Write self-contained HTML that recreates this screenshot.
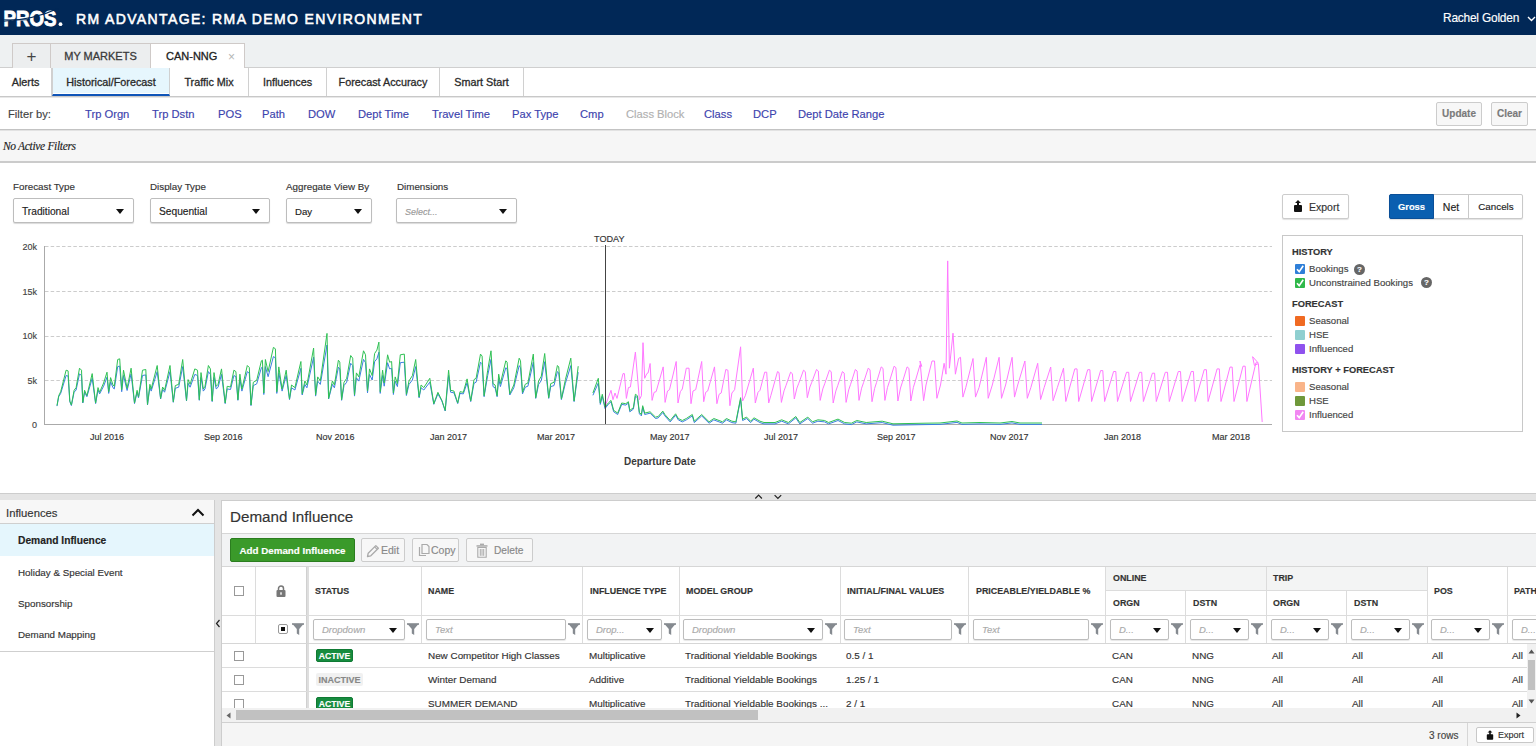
<!DOCTYPE html>
<html><head><meta charset="utf-8"><style>
*{box-sizing:border-box;margin:0;padding:0}
html,body{width:1536px;height:746px;overflow:hidden;background:#fff;font-family:"Liberation Sans",sans-serif;color:#333;position:relative}
.a{-webkit-text-stroke:0.15px}
.a{position:absolute;white-space:nowrap}
#hdr{left:0;top:0;width:1536px;height:35px;background:#012857}
#tabs{left:0;top:35px;width:1536px;height:33px;background:#eef1f2;border-bottom:1px solid #cfcfcf}
.tab{top:8px;height:25px;border:1px solid #cfcac8;border-bottom:none;background:#eceeef;font-size:11px;color:#3a3a3a;-webkit-text-stroke:0.3px;text-align:center;line-height:25px}
#sub{left:0;top:68px;width:1536px;height:29px;background:#fff;border-bottom:1px solid #c8c8c8}
.st{top:0;height:28px;border-right:1px solid #d0d0d0;font-size:10.8px;color:#2a2a2a;-webkit-text-stroke:0.3px;text-align:center;line-height:29px}
#filt{left:0;top:97px;width:1536px;height:33px;background:#fff;border-top:1px solid #e8e8e8;border-bottom:1px solid #c3c3c3}
.fl{top:10px;font-size:11.2px;color:#3c43ad}
#naf{left:0;top:130px;width:1536px;height:33px;background:#f6f6f6;border-top:1px solid #e2e2e2;border-bottom:2px solid #cbcbcb}
.btn{border:1px solid #ccc;border-radius:2px;background:#f7f7f7;font-size:11px;color:#777;text-align:center}
.lbl{font-size:9.8px;color:#333;top:181px}
.sel{top:198px;height:25px;border:1px solid #bdbdbd;border-radius:2px;background:#fff;font-size:10.2px;color:#222;line-height:25px;padding-left:8px;box-shadow:0 1px 1px rgba(0,0,0,.15)}
.car{position:absolute;width:0;height:0;border-left:4.5px solid transparent;border-right:4.5px solid transparent;border-top:5px solid #111}
.yl{font-size:9px;color:#444;text-align:right;width:30px;left:7px}
.xl{font-size:9px;color:#333;top:432px}
.lg{font-size:9.6px;color:#444;left:1309px}
.lgh{font-size:9.3px;font-weight:bold;color:#333;left:1292px}
.sw{width:10px;height:10px;left:1295px;border-radius:1px}
.q{width:11px;height:11px;border-radius:50%;background:#666;color:#fff;font-size:8px;font-weight:bold;text-align:center;line-height:11px}
.li{font-size:9.8px;color:#333;left:18px}
.hd{font-size:8.9px;font-weight:bold;color:#333}
.vl{width:1px;background:#dcdcdc}
.hl{height:1px;background:#dcdcdc}
.fi{top:619px;height:21px;border:1px solid #bdbdbd;border-radius:2px;background:#fff;font-size:9.5px;color:#aaa;font-style:italic;line-height:19px;padding-left:8px;box-shadow:0 1px 1px rgba(0,0,0,.1)}
.cell{font-size:9.9px;color:#333}
.cb{width:10px;height:10px;border:1px solid #999;background:#fff;left:234px}
</style></head><body>
<div id="hdr" class="a">
  <svg class="a" style="left:0;top:0" width="70" height="35"><text x="3.5" y="25.7" font-family="Liberation Sans" font-weight="bold" font-size="22.5" fill="#fff" stroke="#fff" stroke-width="0.9" textLength="53" lengthAdjust="spacingAndGlyphs">PROS</text><path d="M1 21.5 Q 35 19.5 58 8.5" stroke="#012857" stroke-width="1.2" fill="none"/><path d="M3 19.8 H30" stroke="#012857" stroke-width="0.9"/><circle cx="60.5" cy="24.2" r="1.9" fill="#fff"/></svg>
  <div class="a" style="left:76px;top:11px;font-size:14px;color:#fff;letter-spacing:1.37px;-webkit-text-stroke:0.55px #fff">RM ADVANTAGE: RMA DEMO ENVIRONMENT</div>
  <div class="a" style="left:1443px;top:10.5px;font-size:11.9px;color:#fff;letter-spacing:-0.2px">Rachel Golden</div>
  <svg class="a" style="left:1527px;top:16px" width="9" height="6"><path d="M1 1 L4.5 4.5 L8 1" stroke="#fff" stroke-width="1.4" fill="none"/></svg>
</div>
<div id="tabs" class="a">
  <div class="a tab" style="left:12px;width:39px;font-size:17px;line-height:25px;color:#444;-webkit-text-stroke:0">+</div>
  <div class="a tab" style="left:50px;width:101px">MY MARKETS</div>
  <div class="a tab" style="left:150px;width:95px;background:#fff;height:26px"><span style="position:absolute;left:15px;font-size:11px;color:#222">CAN-NNG</span><span style="position:absolute;left:77px;top:1px;color:#b5b5b5;font-size:12px;-webkit-text-stroke:0">&#215;</span></div>
</div>
<div id="sub" class="a">
  <div class="a st" style="left:0;width:52px">Alerts</div>
  <div class="a st" style="left:52px;width:118px;background:#e6f6fd;border-left:1px solid #d0d0d0;border-bottom:2px solid #0f55b8;line-height:29px;box-shadow:inset 0 -1px 0 #fff">Historical/Forecast</div>
  <div class="a st" style="left:170px;width:79px">Traffic Mix</div>
  <div class="a st" style="left:249px;width:78px">Influences</div>
  <div class="a st" style="left:327px;width:113px">Forecast Accuracy</div>
  <div class="a st" style="left:440px;width:84px">Smart Start</div>
</div>
<div id="filt" class="a">
  <div class="a fl" style="left:8px;color:#444">Filter by:</div>

<div class="a fl" style="left:85px">Trp Orgn</div>
<div class="a fl" style="left:152px">Trp Dstn</div>
<div class="a fl" style="left:218px">POS</div>
<div class="a fl" style="left:262px">Path</div>
<div class="a fl" style="left:308px">DOW</div>
<div class="a fl" style="left:358px">Dept Time</div>
<div class="a fl" style="left:432px">Travel Time</div>
<div class="a fl" style="left:512px">Pax Type</div>
<div class="a fl" style="left:580px">Cmp</div>
<div class="a fl" style="left:626px;color:#b0b0b0">Class Block</div>
<div class="a fl" style="left:704px">Class</div>
<div class="a fl" style="left:753px">DCP</div>
<div class="a fl" style="left:798px">Dept Date Range</div>
  <div class="a btn" style="left:1436px;top:4px;width:46px;height:24px;line-height:22px;font-weight:bold;font-size:10px;color:#7a7a7a">Update</div>
  <div class="a btn" style="left:1491px;top:4px;width:37px;height:24px;line-height:22px;font-weight:bold;font-size:10px;color:#7a7a7a">Clear</div>
</div>
<div id="naf" class="a">
  <div class="a" style="left:3px;top:9px;font-family:'Liberation Serif',serif;font-style:italic;font-size:11.5px;letter-spacing:-0.33px;color:#222">No Active Filters</div>
</div>

<div class="a lbl" style="left:13px">Forecast Type</div>
<div class="a lbl" style="left:150px">Display Type</div>
<div class="a lbl" style="left:286px">Aggregate View By</div>
<div class="a lbl" style="left:397px">Dimensions</div>
<div class="a sel" style="left:13px;width:121px">Traditional<div class="car" style="left:102px;top:10px"></div></div>
<div class="a sel" style="left:150px;width:120px">Sequential<div class="car" style="left:101px;top:10px"></div></div>
<div class="a sel" style="left:286px;width:86px"><span style="font-size:9.6px">Day</span><div class="car" style="left:67px;top:10px"></div></div>
<div class="a sel" style="left:396px;width:121px"><i style="color:#999;font-size:9px">Select...</i><div class="car" style="left:102px;top:10px"></div></div>
<div class="a btn" style="left:1282px;top:194px;width:67px;height:25px;background:#fff;color:#333;font-size:10.5px;line-height:24px;text-align:left;padding-left:26px;box-shadow:0 1px 1px rgba(0,0,0,.12)">Export
<svg style="position:absolute;left:10px;top:5px" width="10" height="12" viewBox="0 0 10 12"><path d="M5 0 L8 3 H6 V7 H4 V3 H2 Z" fill="#111"/><rect x="1" y="5" width="8" height="7" rx="1" fill="#111"/><path d="M4 3 H6 V8 H4Z" fill="#111"/></svg></div>
<div class="a" style="left:1389px;top:194px;width:134px;height:25px;border:1px solid #c9c9c9;border-radius:2px;background:#fff;box-shadow:0 1px 1px rgba(0,0,0,.12)">
  <div class="a" style="left:-1px;top:-1px;width:45px;height:25px;background:#0a5fb0;border:1px solid #0a4f98;border-radius:2px 0 0 2px;color:#fff;font-size:9.4px;font-weight:bold;text-align:center;line-height:24px">Gross</div>
  <div class="a" style="left:44px;top:0;width:35px;height:23px;border-right:1px solid #c9c9c9;color:#222;font-size:10.5px;text-align:center;line-height:24px">Net</div>
  <div class="a" style="left:79px;top:0;width:54px;height:23px;color:#222;font-size:9.8px;text-align:center;line-height:24px">Cancels</div>
</div>

<div class="a" style="left:1282px;top:235px;width:241px;height:197px;border:1px solid #c8c8c8;background:#fff"></div>
<div class="a lgh" style="top:247px">HISTORY</div>
<div class="a lgh" style="top:299px">FORECAST</div>
<div class="a lgh" style="top:365px">HISTORY + FORECAST</div>
<div class="a sw" style="top:264px;background:#2f7fd8"><svg width="10" height="10" style="position:absolute;left:0;top:0"><path d="M2 5.2 L4.2 7.6 L8.2 1.8" stroke="#fff" stroke-width="1.6" fill="none"/></svg></div>
<div class="a lg" style="top:263px">Bookings</div>
<div class="a sw" style="top:278px;background:#2fb84a"><svg width="10" height="10" style="position:absolute;left:0;top:0"><path d="M2 5.2 L4.2 7.6 L8.2 1.8" stroke="#fff" stroke-width="1.6" fill="none"/></svg></div>
<div class="a lg" style="top:277px">Unconstrained Bookings</div>
<div class="a sw" style="top:316px;background:#f06a22"></div>
<div class="a lg" style="top:315px">Seasonal</div>
<div class="a sw" style="top:330px;background:#8fcfd0"></div>
<div class="a lg" style="top:329px">HSE</div>
<div class="a sw" style="top:344px;background:#8f52ee"></div>
<div class="a lg" style="top:343px">Influenced</div>
<div class="a sw" style="top:382px;background:#f9b489"></div>
<div class="a lg" style="top:381px">Seasonal</div>
<div class="a sw" style="top:396px;background:#6f983a"></div>
<div class="a lg" style="top:395px">HSE</div>
<div class="a sw" style="top:410px;background:#f287f2"><svg width="10" height="10" style="position:absolute;left:0;top:0"><path d="M2 5.2 L4.2 7.6 L8.2 1.8" stroke="#fff" stroke-width="1.6" fill="none"/></svg></div>
<div class="a lg" style="top:409px">Influenced</div>
<div class="a q" style="left:1354px;top:264px">?</div>
<div class="a q" style="left:1421px;top:277px">?</div>
<svg class="a" style="left:0;top:230px" width="1280" height="200" viewBox="0 230 1280 200"><line x1="45" y1="246.5" x2="1272" y2="246.5" stroke="#cccccc" stroke-dasharray="3.5,2.17"/><line x1="45" y1="291.5" x2="1272" y2="291.5" stroke="#cccccc" stroke-dasharray="3.5,2.17"/><line x1="45" y1="336.5" x2="1272" y2="336.5" stroke="#cccccc" stroke-dasharray="3.5,2.17"/><line x1="45" y1="380.5" x2="1272" y2="380.5" stroke="#cccccc" stroke-dasharray="3.5,2.17"/><line x1="44.5" y1="246" x2="44.5" y2="425" stroke="#aaa"/><line x1="44" y1="424.5" x2="1272" y2="424.5" stroke="#aaa"/><path d="M605.6 405.0 L611.0 390.3 L613.0 399.7 L615.0 393.0 L617.0 398.4 L623.0 373.6 L624.4 373.6 L626.4 398.4 L628.4 387.6 L630.4 387.0 L635.4 352.1 L639.4 399.7 L641.4 395.7 L643.0 342.7 L644.7 378.3 L646.8 373.6 L648.1 372.9 L650.1 363.5 L652.1 400.4 L654.1 392.3 L656.1 391.7 L663.2 366.9 L665.1 402.4 L667.5 391.0 L669.5 389.7 L676.2 361.5 L678.0 403.0 L680.3 391.7 L682.3 389.0 L686.3 368.2 L689.0 368.2 L691.0 403.7 L693.0 391.0 L695.7 389.7 L701.7 361.5 L703.7 401.7 L705.7 392.3 L707.7 391.0 L714.5 366.9 L716.9 403.7 L719.1 394.3 L721.2 393.0 L725.8 369.5 L727.9 370.2 L729.9 405.7 L731.9 393.0 L734.6 389.7 L740.6 346.8 L742.6 401.0 L745.3 395.7 L753.3 368.2 L755.3 403.0 L758.0 392.3 L760.0 390.3 L764.7 372.2 L766.7 372.2 L768.7 403.0 L770.8 395.7 L777.5 371.6 L779.0 372.5 L781.4 402.4 L784.0 390.9 L785.9 385.8 L790.6 372.2 L792.4 373.7 L794.3 399.0 L796.9 388.1 L798.8 383.2 L803.5 370.2 L805.3 371.7 L807.3 397.7 L809.9 387.0 L811.8 382.2 L816.5 369.5 L818.3 371.0 L820.2 400.4 L822.8 388.9 L824.7 383.8 L829.4 370.2 L831.2 371.7 L833.2 403.0 L835.8 391.1 L837.7 385.7 L842.4 371.6 L844.2 373.1 L846.1 402.4 L848.7 389.9 L850.6 384.3 L855.3 369.5 L857.1 371.0 L859.0 400.4 L861.6 388.2 L863.5 382.7 L868.2 368.2 L870.0 369.7 L872.0 401.7 L874.6 388.5 L876.5 382.6 L881.2 366.9 L883.0 368.4 L884.9 400.4 L887.5 387.4 L889.4 381.6 L894.1 366.2 L895.9 367.7 L897.9 401.0 L900.5 388.0 L902.4 382.2 L907.1 366.9 L908.9 368.4 L910.8 401.0 L913.4 387.3 L915.3 381.1 L920.0 364.9 L921.8 366.4 L920.0 361.0 L923.6 400.7 L926.0 385.0 L932.0 361.0 L934.5 361.0 L936.9 398.3 L940.5 385.0 L944.1 363.3 L946.0 374.2 L947.7 260.9 L949.4 368.2 L953.0 333.2 L955.4 374.2 L958.6 358.5 L960.5 357.3 L962.9 397.1 L965.8 387.4 L973.0 358.5 L975.5 397.1 L979.1 387.4 L986.3 357.3 L988.2 398.3 L992.3 385.0 L999.1 357.3 L1001.5 398.3 L1005.6 385.0 L1012.1 357.3 L1014.5 397.1 L1017.7 385.0 L1024.9 361.0 L1027.3 398.3 L1030.9 387.4 L1037.7 363.3 L1040.6 399.5 L1044.2 387.4 L1050.7 367.0 L1053.1 400.7 L1057.4 387.4 L1063.5 368.2 L1065.8 401.5 L1074.8 368.9 L1077.0 368.9 L1078.7 401.5 L1087.7 369.7 L1089.9 369.7 L1091.6 401.5 L1100.6 370.6 L1102.8 370.6 L1104.6 401.5 L1113.6 371.5 L1115.8 371.5 L1117.5 401.5 L1126.5 372.3 L1128.7 372.3 L1130.5 401.5 L1139.5 372.3 L1141.7 372.3 L1143.4 401.5 L1152.4 373.2 L1154.6 373.2 L1156.3 401.5 L1165.3 372.3 L1167.5 372.3 L1169.3 401.5 L1178.3 371.5 L1180.5 371.5 L1182.2 401.5 L1191.2 371.5 L1193.4 371.5 L1195.2 401.5 L1204.2 369.7 L1206.4 369.7 L1208.1 401.5 L1217.1 368.9 L1219.3 368.9 L1221.0 401.5 L1230.0 367.1 L1232.2 367.1 L1234.0 401.5 L1243.0 366.2 L1245.2 366.2 L1246.9 401.5 L1255.9 362.8 L1258.1 362.8 L1252.6 356.7 L1254.4 365.4 L1258.4 363.6 L1262.2 422.0" fill="none" stroke="#ff78ff" stroke-width="1" stroke-linejoin="round"/><path d="M57.0 406.1 L58.7 396.7 L60.7 393.4 L66.1 375.5 L68.1 376.1 L69.8 401.6 L71.4 405.6 L74.1 392.2 L76.1 390.0 L79.5 373.9 L81.5 375.5 L82.8 403.0 L84.6 392.2 L86.9 396.7 L92.2 378.3 L95.6 403.6 L98.0 390.0 L99.6 393.9 L103.6 386.2 L107.0 377.2 L108.7 393.4 L110.6 381.7 L113.0 387.8 L114.3 388.9 L117.7 366.6 L119.7 366.1 L121.7 391.7 L123.5 375.5 L127.1 390.5 L131.1 373.9 L134.5 403.6 L137.1 392.2 L138.5 397.8 L142.5 375.5 L145.8 374.9 L147.5 405.0 L149.9 387.2 L151.2 391.1 L157.2 371.6 L160.6 399.0 L162.6 389.5 L164.6 392.2 L170.0 371.6 L173.3 402.3 L175.3 388.3 L178.7 387.2 L182.7 366.6 L186.5 401.0 L188.1 383.3 L190.1 387.2 L194.8 374.4 L197.5 375.5 L199.3 400.3 L201.0 377.5 L203.3 391.1 L205.0 388.9 L208.4 371.6 L210.4 374.4 L212.2 401.6 L214.0 377.5 L216.2 388.9 L218.1 387.2 L221.5 374.4 L225.2 403.6 L227.2 388.9 L230.5 389.5 L233.9 375.5 L235.9 376.7 L237.9 400.3 L239.9 378.8 L241.9 391.1 L247.3 371.6 L249.3 373.3 L251.0 405.6 L253.3 385.6 L256.7 383.9 L261.4 367.7 L262.4 367.2 L263.8 394.5 L265.4 366.6 L268.1 376.7 L273.4 356.6 L275.4 357.8 L276.8 393.4 L278.8 372.8 L282.1 391.1 L286.2 375.5 L289.5 399.6 L291.5 387.8 L294.9 390.0 L300.9 368.3 L302.2 395.0 L304.9 384.4 L306.9 387.8 L313.6 357.2 L315.6 396.1 L317.7 381.1 L320.3 384.4 L327.0 345.0 L328.6 399.0 L332.4 384.4 L334.4 387.8 L338.4 367.2 L339.8 368.9 L341.6 400.3 L344.0 385.6 L346.7 382.2 L350.7 363.3 L352.7 365.6 L354.5 396.1 L356.4 377.8 L358.8 381.1 L363.5 359.4 L365.5 362.7 L367.5 392.8 L369.5 374.4 L372.2 380.0 L374.6 361.7 L376.9 358.8 L378.9 352.2 L380.2 393.4 L382.6 375.5 L384.2 386.2 L387.6 362.7 L389.6 368.9 L391.6 368.3 L393.4 394.5 L395.2 381.1 L397.4 386.6 L400.3 362.7 L404.3 362.2 L406.4 395.5 L409.0 384.4 L412.4 380.0 L415.7 366.6 L419.1 397.8 L421.1 387.8 L423.8 390.0 L429.8 382.2 L433.8 404.3 L437.9 393.9 L441.9 401.0 L445.2 411.0 L448.6 375.5 L450.6 392.2 L453.9 392.8 L457.7 403.6 L460.0 393.4 L463.3 393.9 L467.1 382.7 L470.7 401.6 L474.0 383.3 L476.1 382.2 L480.5 362.2 L482.1 363.8 L484.1 396.7 L487.7 375.5 L491.0 359.4 L493.0 386.6 L495.1 387.8 L497.1 396.7 L498.7 378.8 L500.4 386.6 L505.8 367.7 L507.1 368.9 L509.8 395.0 L513.8 387.8 L519.2 365.6 L520.5 367.7 L522.5 393.9 L525.2 387.2 L527.9 386.2 L533.3 362.2 L535.7 398.4 L538.6 384.4 L541.3 380.5 L544.7 361.7 L548.7 398.4 L550.7 386.6 L554.0 385.6 L557.4 371.6 L558.7 372.8 L561.4 399.6 L565.4 383.3 L570.8 365.6 L574.1 401.6 L578.2 372.2" fill="none" stroke="#3b7fe0" stroke-width="1" stroke-linejoin="round"/><path d="M592.9 395.3 L598.3 383.0 L600.3 404.4 L602.3 396.3 L605.0 408.5 L608.3 404.4 L611.0 401.8 L613.7 411.8 L617.7 414.5 L621.7 404.4 L625.8 405.1 L628.4 403.1 L629.8 411.8 L633.4 409.1 L635.4 396.3 L637.4 397.5 L639.4 413.8 L641.4 415.9 L642.7 407.1 L644.7 414.5 L650.1 413.2 L655.5 418.5 L658.2 417.9 L662.8 412.5 L664.9 415.9 L670.2 421.9 L675.6 415.2 L678.3 419.9 L682.3 421.9 L686.3 419.9 L692.3 415.9 L694.3 422.6 L701.7 415.9 L709.1 423.2 L713.8 419.9 L722.5 423.2 L726.5 419.9 L731.9 422.6 L735.9 423.2 L740.6 399.2 L742.6 420.5 L746.6 418.5 L750.6 422.6 L754.0 419.2 L760.0 422.6 L764.0 423.9 L775.0 423.9 L781.7 421.2 L788.4 423.9 L795.8 417.9 L799.8 423.9 L807.8 418.5 L812.5 423.2 L817.9 421.2 L824.6 421.9 L828.6 423.9 L838.0 420.5 L844.7 423.9 L851.4 424.6 L856.8 421.9 L866.2 423.9 L882.2 422.6 L893.0 425.2 L925.0 424.6 L940.0 424.4 L957.0 422.4 L962.0 424.4 L980.0 423.9 L1000.0 424.4 L1012.0 422.9 L1020.0 424.4 L1042.0 424.4" fill="none" stroke="#3b7fe0" stroke-width="1" stroke-linejoin="round"/><path d="M57.0 405.5 L58.7 395.7 L60.7 391.7 L66.1 370.2 L68.1 370.9 L69.8 401.0 L71.4 405.0 L74.1 390.3 L76.1 387.6 L79.5 368.2 L81.5 370.2 L82.8 402.4 L84.6 390.3 L86.9 395.7 L92.2 373.6 L95.6 403.0 L98.0 387.6 L99.6 392.3 L103.6 383.0 L107.0 372.2 L108.7 391.7 L110.6 377.6 L113.0 385.0 L114.3 386.3 L117.7 359.5 L119.7 358.8 L121.7 389.7 L123.5 370.2 L127.1 388.3 L131.1 368.2 L134.5 403.0 L137.1 390.3 L138.5 397.0 L142.5 370.2 L145.8 369.5 L147.5 404.4 L149.9 384.3 L151.2 389.0 L157.2 365.5 L160.6 398.4 L162.6 387.0 L164.6 390.3 L170.0 365.5 L173.3 401.7 L175.3 385.6 L178.7 384.3 L182.7 359.5 L186.5 400.4 L188.1 379.6 L190.1 384.3 L194.8 368.9 L197.5 370.2 L199.3 399.7 L201.0 372.6 L203.3 389.0 L205.0 386.3 L208.4 365.5 L210.4 368.9 L212.2 401.0 L214.0 372.6 L216.2 386.3 L218.1 384.3 L221.5 368.9 L225.2 403.0 L227.2 386.3 L230.5 387.0 L233.9 370.2 L235.9 371.6 L237.9 399.7 L239.9 374.2 L241.9 389.0 L247.3 365.5 L249.3 367.5 L251.0 405.0 L253.3 382.3 L256.7 380.3 L261.4 360.8 L262.4 360.2 L263.8 393.0 L265.4 359.5 L268.1 371.6 L273.4 347.4 L275.4 348.8 L276.8 391.7 L278.8 366.9 L282.1 389.0 L286.2 370.2 L289.5 399.0 L291.5 385.0 L294.9 387.6 L300.9 361.5 L302.2 393.7 L304.9 380.9 L306.9 385.0 L313.6 348.1 L315.6 395.0 L317.7 376.9 L320.3 380.9 L327.0 333.4 L328.6 398.4 L332.4 380.9 L334.4 385.0 L338.4 360.2 L339.8 362.2 L341.6 399.7 L344.0 382.3 L346.7 378.3 L350.7 355.5 L352.7 358.2 L354.5 395.0 L356.4 372.9 L358.8 376.9 L363.5 350.8 L365.5 354.8 L367.5 391.0 L369.5 368.9 L372.2 375.6 L374.6 353.5 L376.9 350.1 L378.9 342.1 L380.2 391.7 L382.6 370.2 L384.2 383.0 L387.6 354.8 L389.6 362.2 L391.6 361.5 L393.4 393.0 L395.2 376.9 L397.4 383.6 L400.3 354.8 L404.3 354.1 L406.4 394.3 L409.0 380.9 L412.4 375.6 L415.7 359.5 L419.1 397.0 L421.1 385.0 L423.8 387.6 L429.8 378.3 L433.8 403.7 L437.9 392.3 L441.9 400.4 L445.2 410.4 L448.6 370.2 L450.6 390.3 L453.9 391.0 L457.7 403.0 L460.0 391.7 L463.3 392.3 L467.1 378.9 L470.7 401.0 L474.0 379.6 L476.1 378.3 L480.5 354.1 L482.1 356.1 L484.1 395.7 L487.7 370.2 L491.0 350.8 L493.0 383.6 L495.1 385.0 L497.1 395.7 L498.7 374.2 L500.4 383.6 L505.8 360.8 L507.1 362.2 L509.8 393.7 L513.8 385.0 L519.2 358.2 L520.5 360.8 L522.5 392.3 L525.2 384.3 L527.9 383.0 L533.3 354.1 L535.7 397.7 L538.6 380.9 L541.3 376.2 L544.7 353.5 L548.7 397.7 L550.7 383.6 L554.0 382.3 L557.4 365.5 L558.7 366.9 L561.4 399.0 L565.4 379.6 L570.8 358.2 L574.1 401.0 L578.2 366.2" fill="none" stroke="#2fc154" stroke-width="1" stroke-linejoin="round"/><path d="M592.9 393.0 L598.3 378.3 L600.3 403.0 L602.3 394.3 L605.0 407.1 L608.3 403.0 L611.0 400.4 L613.7 410.4 L617.7 413.1 L621.7 403.0 L625.8 403.7 L628.4 401.7 L629.8 410.4 L633.4 407.7 L635.4 394.3 L637.4 395.7 L639.4 412.4 L641.4 414.5 L642.7 405.7 L644.7 413.1 L650.1 411.8 L655.5 417.1 L658.2 416.5 L662.8 411.1 L664.9 414.5 L670.2 420.5 L675.6 413.8 L678.3 418.5 L682.3 420.5 L686.3 418.5 L692.3 414.5 L694.3 421.2 L701.7 414.5 L709.1 421.8 L713.8 418.5 L722.5 421.8 L726.5 418.5 L731.9 421.2 L735.9 421.8 L740.6 397.7 L742.6 419.1 L746.6 417.1 L750.6 421.2 L754.0 417.8 L760.0 421.2 L764.0 422.5 L775.0 422.5 L781.7 419.8 L788.4 422.5 L795.8 416.5 L799.8 422.5 L807.8 417.1 L812.5 421.8 L817.9 419.8 L824.6 420.5 L828.6 422.5 L838.0 419.1 L844.7 422.5 L851.4 423.2 L856.8 420.5 L866.2 422.5 L882.2 421.2 L893.0 423.8 L925.0 423.2 L940.0 423.0 L957.0 421.0 L962.0 423.0 L980.0 422.5 L1000.0 423.0 L1012.0 421.5 L1020.0 423.0 L1042.0 423.0" fill="none" stroke="#2fc154" stroke-width="1" stroke-linejoin="round"/><line x1="605.5" y1="245" x2="605.5" y2="424" stroke="#444" stroke-width="1"/></svg>
<div class="a yl" style="top:242px">20k</div>
<div class="a yl" style="top:287px">15k</div>
<div class="a yl" style="top:331px">10k</div>
<div class="a yl" style="top:376px">5k</div>
<div class="a yl" style="top:420px">0</div>
<div class="a xl" style="left:90px">Jul 2016</div>
<div class="a xl" style="left:204px">Sep 2016</div>
<div class="a xl" style="left:316px">Nov 2016</div>
<div class="a xl" style="left:430px">Jan 2017</div>
<div class="a xl" style="left:537px">Mar 2017</div>
<div class="a xl" style="left:650px">May 2017</div>
<div class="a xl" style="left:764px">Jul 2017</div>
<div class="a xl" style="left:877px">Sep 2017</div>
<div class="a xl" style="left:990px">Nov 2017</div>
<div class="a xl" style="left:1104px">Jan 2018</div>
<div class="a xl" style="left:1212px">Mar 2018</div>
<div class="a" style="left:594px;top:234px;font-size:9.1px;color:#333">TODAY</div>
<div class="a" style="left:624px;top:456px;font-size:10px;font-weight:bold;color:#3a3a3a;-webkit-text-stroke:0">Departure Date</div>
<div class="a" style="left:0;top:493px;width:1536px;height:8px;background:#e4e4e4;border-top:1px solid #cdcdcd;border-bottom:1px solid #cdcdcd"></div>
<svg class="a" style="left:754px;top:493px" width="30" height="8"><path d="M1.3 5.5 L4.6 2.2 L7.9 5.5" stroke="#222" stroke-width="1.2" fill="none"/><path d="M20.6 2.2 L23.9 5.5 L27.2 2.2" stroke="#222" stroke-width="1.2" fill="none"/></svg>

<div class="a" style="left:0;top:500px;width:214px;height:24px;background:#f7f7f7;border-bottom:1px solid #cfcfcf"></div>
<div class="a" style="left:6px;top:507px;font-size:11.3px;color:#333">Influences</div>
<svg class="a" style="left:191px;top:508px" width="14" height="9"><path d="M1.5 7.5 L7 2 L12.5 7.5" stroke="#111" stroke-width="2" fill="none"/></svg>
<div class="a" style="left:0;top:524px;width:214px;height:32px;background:#e5f6fd"></div>
<div class="a li" style="top:535px;font-weight:bold;font-size:10.25px;color:#222">Demand Influence</div>
<div class="a li" style="top:567px">Holiday &amp; Special Event</div>
<div class="a li" style="top:598px">Sponsorship</div>
<div class="a li" style="top:629px">Demand Mapping</div>
<div class="a" style="left:0;top:651px;width:214px;height:1px;background:#cfcfcf"></div>
<div class="a" style="left:214px;top:500px;width:8px;height:246px;background:#e4e4e4;border-left:1px solid #cdcdcd;border-right:1px solid #cdcdcd"></div>
<svg class="a" style="left:215px;top:619px" width="6" height="9"><path d="M4.5 1 L1.5 4.5 L4.5 8" stroke="#222" stroke-width="1.2" fill="none"/></svg>

<div class="a" style="left:230px;top:508px;font-size:15.2px;color:#333">Demand Influence</div>
<div class="a" style="left:222px;top:533px;width:1314px;height:34px;background:#f2f3f4;border-top:1px solid #d6d6d6;border-bottom:1px solid #d6d6d6"></div>
<div class="a" style="left:230px;top:538px;width:125px;height:24px;background:#3a9a2a;border:1px solid #2b7d1f;border-radius:2px;color:#fff;font-size:9.8px;font-weight:bold;text-align:center;line-height:23px">Add Demand Influence</div>
<div class="a btn" style="left:361px;top:538px;width:44px;height:24px;line-height:22px;font-size:10.5px;color:#888;text-align:left;padding-left:19px">Edit
<svg style="position:absolute;left:4px;top:5px" width="14" height="14" viewBox="0 0 14 14"><path d="M1.5 12.5 L2.2 9.2 L9.8 1.6 L12.4 4.2 L4.8 11.8 Z" fill="none" stroke="#aaa" stroke-width="1.3" stroke-linejoin="round"/><path d="M8.6 2.8 L11.2 5.4" stroke="#aaa" stroke-width="1.2"/></svg></div>
<div class="a btn" style="left:412px;top:538px;width:47px;height:24px;line-height:22px;font-size:10.5px;color:#888;text-align:left;padding-left:18px">Copy
<svg style="position:absolute;left:5px;top:4px" width="12" height="14" viewBox="0 0 12 14"><path d="M4 1.5 H9 L11 3.5 V10.5 H4 Z" fill="none" stroke="#aaa" stroke-width="1.2"/><path d="M1.5 4 V12.5 H8" fill="none" stroke="#aaa" stroke-width="1.2"/></svg></div>
<div class="a btn" style="left:466px;top:538px;width:67px;height:24px;line-height:22px;font-size:10.2px;color:#888;text-align:left;padding-left:27px;line-height:24px">Delete
<svg style="position:absolute;left:9px;top:4px" width="12" height="15" viewBox="0 0 12 15"><rect x="0.5" y="2.2" width="11" height="1.5" fill="#aaa"/><rect x="4" y="0.6" width="4" height="1.6" fill="#aaa"/><path d="M1.8 4.5 H10.2 V14.2 H1.8Z" fill="none" stroke="#aaa" stroke-width="1.1"/><path d="M4.3 6 V12.8 M6 6 V12.8 M7.7 6 V12.8" stroke="#aaa" stroke-width="1"/></svg></div>

<div class="a" style="left:222px;top:567px;width:1314px;height:76px;background:#fff"></div>
<div class="a" style="left:1106px;top:567px;width:321px;height:23px;background:#f3f4f4"></div>
<div class="a vl" style="left:255px;top:567px;height:76px"></div>
<div class="a vl" style="left:421px;top:567px;height:76px"></div>
<div class="a vl" style="left:582px;top:567px;height:76px"></div>
<div class="a vl" style="left:679px;top:567px;height:76px"></div>
<div class="a vl" style="left:840px;top:567px;height:76px"></div>
<div class="a vl" style="left:968px;top:567px;height:76px"></div>
<div class="a vl" style="left:1105px;top:567px;height:76px"></div>
<div class="a vl" style="left:1427px;top:567px;height:76px"></div>
<div class="a vl" style="left:1507px;top:567px;height:76px"></div>
<div class="a vl" style="left:1185px;top:590px;height:53px"></div>
<div class="a vl" style="left:1266px;top:590px;height:53px"></div>
<div class="a vl" style="left:1346px;top:590px;height:53px"></div>
<div class="a vl" style="left:1266px;top:567px;height:24px"></div>
<div class="a" style="left:306px;top:567px;width:3px;height:141px;background:#dedede;border-left:1px solid #d0d0d0"></div>
<div class="a hl" style="left:1106px;top:590px;width:321px"></div>
<div class="a hl" style="left:222px;top:615px;width:1314px"></div>
<div class="a hl" style="left:222px;top:643px;width:1314px;background:#d6d6d6"></div>
<div class="a cb" style="top:586px;left:234px"></div>
<svg class="a" style="left:276px;top:585px" width="10" height="12" viewBox="0 0 10 12"><path d="M2.5 5 V3.5 A2.5 2.5 0 0 1 7.5 3.5 V5" fill="none" stroke="#777" stroke-width="1.5"/><rect x="0.5" y="5" width="9" height="7" rx="1" fill="#777"/><rect x="4.3" y="7.3" width="1.4" height="2.4" fill="#fff"/></svg>
<div class="a hd" style="left:315px;top:586px">STATUS</div>
<div class="a hd" style="left:428px;top:586px">NAME</div>
<div class="a hd" style="left:590px;top:586px">INFLUENCE TYPE</div>
<div class="a hd" style="left:686px;top:586px">MODEL GROUP</div>
<div class="a hd" style="left:847px;top:586px">INITIAL/FINAL VALUES</div>
<div class="a hd" style="left:976px;top:586px">PRICEABLE/YIELDABLE %</div>
<div class="a hd" style="left:1113px;top:573px">ONLINE</div>
<div class="a hd" style="left:1273px;top:573px">TRIP</div>
<div class="a hd" style="left:1113px;top:598px">ORGN</div>
<div class="a hd" style="left:1193px;top:598px">DSTN</div>
<div class="a hd" style="left:1273px;top:598px">ORGN</div>
<div class="a hd" style="left:1354px;top:598px">DSTN</div>
<div class="a hd" style="left:1434px;top:586px">POS</div>
<div class="a hd" style="left:1514px;top:586px">PATH</div>
<div class="a" style="left:278px;top:624px;width:10px;height:10px;border:1px solid #999;border-radius:2px;background:#fff"><div style="position:absolute;left:2px;top:2px;width:4px;height:4px;background:#111"></div></div>
<svg class="a" style="left:292px;top:623px" width="12" height="13" viewBox="0 0 12 13"><path d="M0.5 1 H11.5 L7.2 6 V12 L4.8 10.5 V6 Z" fill="#858a90"/><rect x="0" y="0.2" width="12" height="1.6" fill="#858a90"/></svg>
<div class="a fi" style="left:313px;width:92px">Dropdown<div class="car" style="left:74.5px;top:8px"></div></div>
<svg class="a" style="left:407px;top:623px" width="12" height="13" viewBox="0 0 12 13"><path d="M0.5 1 H11.5 L7.2 6 V12 L4.8 10.5 V6 Z" fill="#858a90"/><rect x="0" y="0.2" width="12" height="1.6" fill="#858a90"/></svg>
<div class="a fi" style="left:426px;width:140px">Text</div>
<svg class="a" style="left:568px;top:623px" width="12" height="13" viewBox="0 0 12 13"><path d="M0.5 1 H11.5 L7.2 6 V12 L4.8 10.5 V6 Z" fill="#858a90"/><rect x="0" y="0.2" width="12" height="1.6" fill="#858a90"/></svg>
<div class="a fi" style="left:587px;width:75px">Drop...<div class="car" style="left:57.5px;top:8px"></div></div>
<svg class="a" style="left:664px;top:623px" width="12" height="13" viewBox="0 0 12 13"><path d="M0.5 1 H11.5 L7.2 6 V12 L4.8 10.5 V6 Z" fill="#858a90"/><rect x="0" y="0.2" width="12" height="1.6" fill="#858a90"/></svg>
<div class="a fi" style="left:683px;width:140px">Dropdown<div class="car" style="left:122.5px;top:8px"></div></div>
<svg class="a" style="left:825px;top:623px" width="12" height="13" viewBox="0 0 12 13"><path d="M0.5 1 H11.5 L7.2 6 V12 L4.8 10.5 V6 Z" fill="#858a90"/><rect x="0" y="0.2" width="12" height="1.6" fill="#858a90"/></svg>
<div class="a fi" style="left:844px;width:108px">Text</div>
<svg class="a" style="left:954px;top:623px" width="12" height="13" viewBox="0 0 12 13"><path d="M0.5 1 H11.5 L7.2 6 V12 L4.8 10.5 V6 Z" fill="#858a90"/><rect x="0" y="0.2" width="12" height="1.6" fill="#858a90"/></svg>
<div class="a fi" style="left:973px;width:116px">Text</div>
<svg class="a" style="left:1091px;top:623px" width="12" height="13" viewBox="0 0 12 13"><path d="M0.5 1 H11.5 L7.2 6 V12 L4.8 10.5 V6 Z" fill="#858a90"/><rect x="0" y="0.2" width="12" height="1.6" fill="#858a90"/></svg>
<div class="a fi" style="left:1110px;width:59px">D...<div class="car" style="left:41.5px;top:8px"></div></div>
<svg class="a" style="left:1171px;top:623px" width="12" height="13" viewBox="0 0 12 13"><path d="M0.5 1 H11.5 L7.2 6 V12 L4.8 10.5 V6 Z" fill="#858a90"/><rect x="0" y="0.2" width="12" height="1.6" fill="#858a90"/></svg>
<div class="a fi" style="left:1190px;width:59px">D...<div class="car" style="left:41.5px;top:8px"></div></div>
<svg class="a" style="left:1251px;top:623px" width="12" height="13" viewBox="0 0 12 13"><path d="M0.5 1 H11.5 L7.2 6 V12 L4.8 10.5 V6 Z" fill="#858a90"/><rect x="0" y="0.2" width="12" height="1.6" fill="#858a90"/></svg>
<div class="a fi" style="left:1271px;width:58px">D...<div class="car" style="left:40.5px;top:8px"></div></div>
<svg class="a" style="left:1331px;top:623px" width="12" height="13" viewBox="0 0 12 13"><path d="M0.5 1 H11.5 L7.2 6 V12 L4.8 10.5 V6 Z" fill="#858a90"/><rect x="0" y="0.2" width="12" height="1.6" fill="#858a90"/></svg>
<div class="a fi" style="left:1351px;width:59px">D...<div class="car" style="left:41.5px;top:8px"></div></div>
<svg class="a" style="left:1412px;top:623px" width="12" height="13" viewBox="0 0 12 13"><path d="M0.5 1 H11.5 L7.2 6 V12 L4.8 10.5 V6 Z" fill="#858a90"/><rect x="0" y="0.2" width="12" height="1.6" fill="#858a90"/></svg>
<div class="a fi" style="left:1431px;width:59px">D...<div class="car" style="left:41.5px;top:8px"></div></div>
<svg class="a" style="left:1492px;top:623px" width="12" height="13" viewBox="0 0 12 13"><path d="M0.5 1 H11.5 L7.2 6 V12 L4.8 10.5 V6 Z" fill="#858a90"/><rect x="0" y="0.2" width="12" height="1.6" fill="#858a90"/></svg>
<div class="a fi" style="left:1512px;width:59px">D...<div class="car" style="left:41.5px;top:8px"></div></div>
<svg class="a" style="left:1573px;top:623px" width="12" height="13" viewBox="0 0 12 13"><path d="M0.5 1 H11.5 L7.2 6 V12 L4.8 10.5 V6 Z" fill="#858a90"/><rect x="0" y="0.2" width="12" height="1.6" fill="#858a90"/></svg>
<div class="a" style="left:222px;top:644px;width:1305px;height:64px;overflow:hidden">
<div class="a" style="left:0;top:23px;width:1305px;height:1px;background:#dcdcdc"></div>
<div class="a cb" style="left:12px;top:7px"></div>
<div class="a" style="left:94px;top:4.5px;width:37px;height:13px;background:#178c3f;border:1px solid #0f7a33;border-radius:2px;color:#fff;font-size:8.6px;font-weight:bold;text-align:center;line-height:13px">ACTIVE</div>
<div class="a cell" style="left:206px;top:6px">New Competitor High Classes</div>
<div class="a cell" style="left:367px;top:6px">Multiplicative</div>
<div class="a cell" style="left:463px;top:6px">Traditional Yieldable Bookings</div>
<div class="a cell" style="left:624px;top:6px">0.5 / 1</div>
<div class="a cell" style="left:890px;top:6px">CAN</div>
<div class="a cell" style="left:970px;top:6px">NNG</div>
<div class="a cell" style="left:1050px;top:6px">All</div>
<div class="a cell" style="left:1130px;top:6px">All</div>
<div class="a cell" style="left:1210px;top:6px">All</div>
<div class="a cell" style="left:1290px;top:6px">All</div>
<div class="a" style="left:0;top:47px;width:1305px;height:1px;background:#dcdcdc"></div>
<div class="a cb" style="left:12px;top:31px"></div>
<div class="a" style="left:94px;top:29px;width:47px;height:13px;background:#f1f1f1;border-radius:2px;color:#888;font-size:9px;font-weight:bold;text-align:center;line-height:15px">INACTIVE</div>
<div class="a cell" style="left:206px;top:30px">Winter Demand</div>
<div class="a cell" style="left:367px;top:30px">Additive</div>
<div class="a cell" style="left:463px;top:30px">Traditional Yieldable Bookings</div>
<div class="a cell" style="left:624px;top:30px">1.25 / 1</div>
<div class="a cell" style="left:890px;top:30px">CAN</div>
<div class="a cell" style="left:970px;top:30px">NNG</div>
<div class="a cell" style="left:1050px;top:30px">All</div>
<div class="a cell" style="left:1130px;top:30px">All</div>
<div class="a cell" style="left:1210px;top:30px">All</div>
<div class="a cell" style="left:1290px;top:30px">All</div>
<div class="a cb" style="left:12px;top:55px"></div>
<div class="a" style="left:94px;top:52.5px;width:37px;height:13px;background:#178c3f;border:1px solid #0f7a33;border-radius:2px;color:#fff;font-size:8.6px;font-weight:bold;text-align:center;line-height:13px">ACTIVE</div>
<div class="a cell" style="left:206px;top:54px">SUMMER DEMAND</div>
<div class="a cell" style="left:367px;top:54px">Multiplicative</div>
<div class="a cell" style="left:463px;top:54px">Traditional Yieldable Bookings ...</div>
<div class="a cell" style="left:624px;top:54px">2 / 1</div>
<div class="a cell" style="left:890px;top:54px">CAN</div>
<div class="a cell" style="left:970px;top:54px">NNG</div>
<div class="a cell" style="left:1050px;top:54px">All</div>
<div class="a cell" style="left:1130px;top:54px">All</div>
<div class="a cell" style="left:1210px;top:54px">All</div>
<div class="a cell" style="left:1290px;top:54px">All</div>
</div>
<div class="a" style="left:1527px;top:644px;width:9px;height:64px;background:#f1f1f1"></div>
<div class="a" style="left:1528px;top:660px;width:7px;height:30px;background:#c1c1c1"></div>
<svg class="a" style="left:1528px;top:649px" width="7" height="5"><path d="M0.5 4.5 L3.5 0.5 L6.5 4.5Z" fill="#555"/></svg>
<svg class="a" style="left:1528px;top:699px" width="7" height="5"><path d="M0.5 0.5 L3.5 4.5 L6.5 0.5Z" fill="#555"/></svg>

<div class="a" style="left:222px;top:708px;width:1314px;height:14px;background:#f1f1f1"></div>
<div class="a" style="left:236px;top:710px;width:522px;height:10px;background:#c1c1c1"></div>
<svg class="a" style="left:226px;top:712px" width="5" height="7"><path d="M4.5 0.5 L0.5 3.5 L4.5 6.5Z" fill="#666"/></svg>
<svg class="a" style="left:1516px;top:712px" width="5" height="7"><path d="M0.5 0.5 L4.5 3.5 L0.5 6.5Z" fill="#222"/></svg>

<div class="a" style="left:222px;top:722px;width:1314px;height:24px;background:#f5f5f5;border-top:1px solid #d0d0d0"></div>
<div class="a" style="left:1429px;top:729.5px;font-size:10px;color:#444">3 rows</div>
<div class="a" style="left:1467px;top:723px;width:1px;height:23px;background:#d6d6d6"></div>
<div class="a" style="left:1476px;top:727px;width:58px;height:16px;border:1px solid #c8c8c8;border-radius:2px;background:#fff;font-size:9px;color:#333;line-height:14px;padding-left:21px">Export
<svg style="position:absolute;left:9px;top:2px" width="8" height="10" viewBox="0 0 10 12"><path d="M5 0 L8 3 H2 Z" fill="#111"/><rect x="4" y="2" width="2" height="5" fill="#111"/><rect x="1" y="5" width="8" height="7" rx="1" fill="#111"/></svg></div>

</body></html>
